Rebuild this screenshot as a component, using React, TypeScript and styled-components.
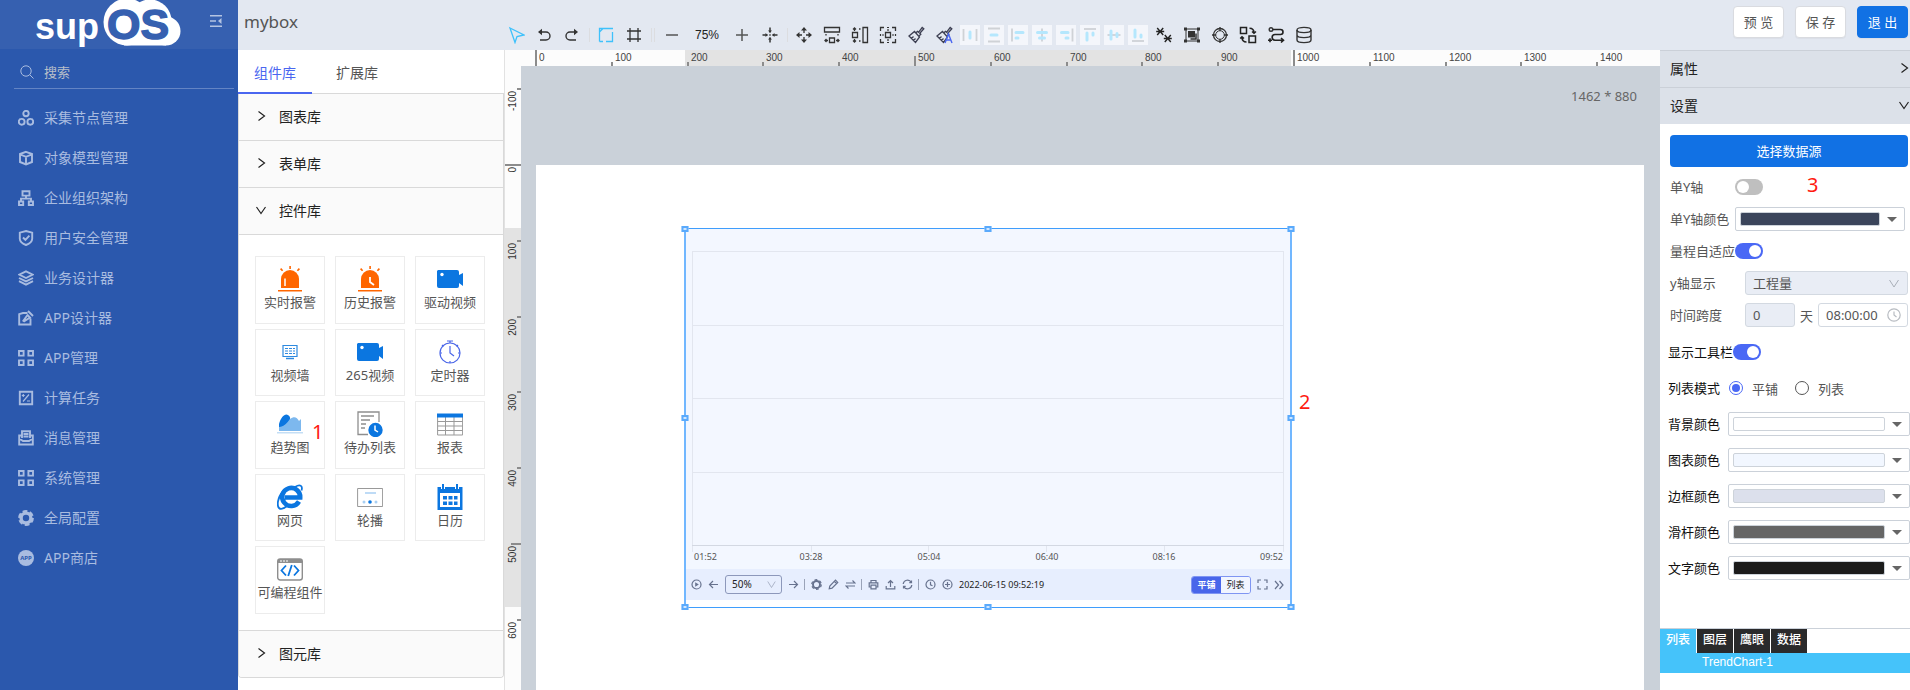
import React from 'react';
import styled, { createGlobalStyle, css } from 'styled-components';

const GlobalStyle = createGlobalStyle`
  *, *::before, *::after { box-sizing: border-box; }
  html, body { margin: 0; }
  body {
    font-family: "Noto Sans", "Noto Sans CJK SC", sans-serif;
    font-size: 14px;
    color: #333;
    overflow: hidden;
  }
  button, input, select { font: inherit; color: inherit; margin: 0; padding: 0; }
  button { background: none; border: 0; cursor: pointer; }
  svg { display: block; flex: none; }
`;

/* ---------- shell ---------- */

const Shell = styled.div`
  display: flex;
  height: 100vh;
  background: #fff;
`;

const Main = styled.div`
  flex: 1;
  min-width: 0;
  display: flex;
  flex-direction: column;
`;

const Workspace = styled.div`
  flex: 1;
  min-height: 0;
  display: flex;
`;

/* ---------- sidebar ---------- */

const Sidebar = styled.aside`
  width: 238px;
  flex: none;
  background: #2b58ad;
  color: #a9bce0;
`;

const SidebarHead = styled.div`
  height: 49px;
  display: flex;
  justify-content: space-between;
  padding-right: 15px;
  background: #3660b0;
`;

const CollapseButton = styled.button`
  height: 42px;
  color: #b4c4e2;
`;

const SearchBox = styled.label`
  display: flex;
  align-items: center;
  gap: 10px;
  height: 40px;
  margin: 0 4px 9px 14px;
  padding: 7px 0 0 6px;
  border-bottom: 1px solid #6384c4;

  input {
    flex: 1;
    min-width: 0;
    border: 0;
    outline: 0;
    background: none;
    font-size: 13px;
  }
  input::placeholder { color: #b9bfc9; opacity: 1; }
`;

const Menu = styled.nav`
  display: flex;
  flex-direction: column;
`;

const MenuLink = styled.a`
  display: flex;
  align-items: center;
  gap: 10px;
  height: 40px;
  padding-left: 18px;
  color: inherit;
  text-decoration: none;
  line-height: 20px;
`;

/* ---------- top bar ---------- */

const TopBar = styled.header`
  display: flex;
  height: 50px;
  flex: none;
  background: #e3e8f1;
`;

const BoxTitle = styled.h1`
  width: 264px;
  margin: 0;
  padding: 10px 6px;
  font-size: 17px;
  line-height: 24px;
  font-weight: 400;
  color: #555;
`;

const Tools = styled.div`
  flex: 1;
  display: flex;
  align-items: center;
  height: 20px;
  margin-top: 25px;
`;

const ToolButton = styled.button`
  width: 28px;
  height: 20px;
  display: grid;
  place-items: center;
  color: #333;
`;

const AlignGroup = styled.div`
  display: flex;
  gap: 4px;
  padding: 0 2px;
`;

const AlignButton = styled.button`
  width: 20px;
  height: 20px;
  display: grid;
  place-items: center;
  background: #f4f6fb;
`;

const Divider = styled.i<{ $double?: boolean }>`
  width: ${(p) => (p.$double ? 10 : 6)}px;
  height: 14px;
  display: flex;
  justify-content: space-evenly;
  &::before { content: ''; width: 1px; background: #dcdde0; }
  ${(p) => p.$double && css`&::after { content: ''; width: 1px; background: #dcdde0; }`}
`;

const ZoomValue = styled.span`
  width: 42px;
  text-align: center;
  font: 12px/20px "Liberation Sans", sans-serif;
  color: #222;
`;

const Actions = styled.div`
  display: flex;
  gap: 11px;
  padding: 6px 2px 0 0;
`;

const ActionButton = styled.button<{ $primary?: boolean }>`
  width: 51px;
  height: 32px;
  padding-bottom: 2px;
  border-radius: 4px;
  font-size: 13px;
  border: 1px solid ${(p) => (p.$primary ? '#1171e4' : '#d9dbe0')};
  background: ${(p) => (p.$primary ? '#1171e4' : '#fff')};
  color: ${(p) => (p.$primary ? '#fff' : '#555')};
  box-shadow: 0 1px 1px rgba(0, 0, 0, 0.04);
  white-space: pre;
`;

/* ---------- component library ---------- */

const Library = styled.section`
  width: 267px;
  flex: none;
  border-right: 1px solid #e2e2e2;
  background: #fff;
`;

const TabBar = styled.div`
  display: flex;
  height: 44px;
  border-bottom: 1px solid #d9d9d9;
`;

const LibraryTab = styled.button<{ $active?: boolean }>`
  height: 44px;
  padding: 2px 16px 0;
  margin-right: 8px;
  border-bottom: 2px solid ${(p) => (p.$active ? '#4a66f0' : 'transparent')};
  color: ${(p) => (p.$active ? '#4a66f0' : '#555')};
`;

const Collapse = styled.div`
  border: 1px solid #d9d9d9;
  border-top: 0;
  border-radius: 0 0 4px 4px;
  overflow: hidden;
`;

const CollapseHead = styled.button<{ $last?: boolean }>`
  display: flex;
  align-items: center;
  gap: 12px;
  width: 100%;
  height: ${(p) => (p.$last ? 46 : 47)}px;
  padding: 0 0 2px 16px;
  background: #fafafa;
  border-bottom: ${(p) => (p.$last ? 0 : 1)}px solid #d9d9d9;
  color: #222;
`;

const CardGrid = styled.div`
  display: grid;
  grid-template-columns: repeat(3, 70px);
  grid-template-rows: repeat(5, 1fr);
  gap: 5px 10px;
  height: 396px;
  padding: 21px 16px 16px;
  border-bottom: 1px solid #d9d9d9;
`;

const Card = styled.button`
  position: relative;
  display: flex;
  flex-direction: column;
  align-items: center;
  padding-top: 9px;
  border: 1px solid #ececec;
  font-size: 13px;
  line-height: 20px;
  color: #555;
  white-space: nowrap;
`;

const Mark = styled.span<{ $x: number; $y: number }>`
  position: absolute;
  left: ${(p) => p.$x}px;
  top: ${(p) => p.$y}px;
  font-size: 20px;
  line-height: 24px;
  color: #ff1a10;
`;

/* ---------- canvas ---------- */

const CanvasArea = styled.section`
  flex: 1;
  min-width: 0;
  display: grid;
  grid-template: 16px minmax(0, 1fr) / 16px minmax(0, 1fr);
  background: #fcfcfc;
`;

const RulerStrip = styled.div`
  min-width: 0;
  min-height: 0;
`;

const Stage = styled.div`
  display: flex;
  flex-direction: column;
  padding: 0 16px 0 15px;
  background: #cad1d9;
`;

const StageSize = styled.div`
  height: 99px;
  padding: 20px 7px 0 0;
  text-align: right;
  font-size: 13px;
  line-height: 20px;
  color: #666;
`;

const Artboard = styled.div`
  position: relative;
  flex: 1;
  background: #fff;
`;

const Widget = styled.div`
  position: absolute;
  left: 148px;
  top: 63px;
  width: 608px;
  height: 380px;
  display: flex;
  flex-direction: column;
  border: solid #3f9dfc;
  border-width: 1px 2px;
  border-left-color: #71b7ff;
  border-right-color: #71b7ff;
`;

const Handle = styled.i<{ $x: string; $y: string }>`
  position: absolute;
  left: ${(p) => p.$x};
  top: ${(p) => p.$y};
  width: 7px;
  height: 6px;
  transform: translate(-50%, -50%);
  border: 2px solid #5aaafc;
  background: #cfe6ff;
`;

const ChartToolbar = styled.div`
  height: 31px;
  margin-bottom: 7px;
  display: flex;
  align-items: center;
  gap: 6px;
  padding: 0 6px 0 5px;
  background: #e7eefe;
  color: #67728e;
  font-size: 9px;

  button { display: block; }
  time { color: #222; padding-bottom: 1px; }
`;

const ChartDivider = styled.i`
  width: 1px;
  height: 11px;
  margin-left: -1px;
  background: #9aa3b8;
`;

const ScaleSelect = styled.div`
  position: relative;
  width: 57px;
  height: 19px;

  select {
    width: 100%;
    height: 100%;
    appearance: none;
    padding: 0 0 1px 6px;
    border: 1px solid #8d98bb;
    border-radius: 3px;
    background: transparent;
    font-size: 10px;
    color: #222;
  }
  svg { position: absolute; right: 6px; top: 5px; color: #9aa3b8; pointer-events: none; }
`;

const ModeSwitch = styled.div`
  display: flex;
  width: 60px;
  height: 18px;
  margin-left: auto;
  border: 1px solid #7f95f2;
  border-radius: 3px;
  overflow: hidden;
  font-size: 9px;
`;

const ModeButton = styled.button<{ $on?: boolean }>`
  flex: 1;
  line-height: 16px;
  background: ${(p) => (p.$on ? '#4966ea' : '#f1f5ff')};
  color: ${(p) => (p.$on ? '#fff' : '#222')};
  font-weight: ${(p) => (p.$on ? 700 : 400)};
`;

/* ---------- property panel ---------- */

const Panel = styled.aside`
  width: 250px;
  flex: none;
  display: flex;
  flex-direction: column;
  background: #fff;
  font-size: 13px;
`;

const PanelHead = styled.button`
  display: flex;
  align-items: center;
  justify-content: space-between;
  height: 37px;
  flex: none;
  padding: 0 0 2px 10px;
  border-top: 1px solid #cbd0d8;
  background: #dce1e9;
  font-size: 14px;
  color: #222;
`;

const Form = styled.form`
  flex: 1;
  min-height: 0;
  overflow: hidden;
  padding-top: 11px;
`;

const SourceButton = styled.button`
  display: block;
  width: calc(100% - 12px);
  height: 32px;
  margin: 0 2px 4px 10px;
  padding-bottom: 2px;
  border-radius: 4px;
  background: #1171e4;
  color: #fff;
`;

const FieldRow = styled.div`
  position: relative;
  display: flex;
  align-items: center;
  height: 32px;
  padding: 0 2px 0 10px;
  color: #555;
`;

const FieldLabel = styled.label`
  min-width: 65px;
  line-height: 20px;
`;

const StyleRows = styled.div`
  margin-top: 3px;
`;

const StyleRow = styled.div`
  display: flex;
  align-items: center;
  height: 36px;
  padding-left: 8px;
  color: #111;
`;

const StyleLabel = styled.label`
  min-width: 60px;
  line-height: 20px;
`;

const Switch = styled.input`
  appearance: none;
  width: 28px;
  height: 16px;
  flex: none;
  border-radius: 8px;
  background: #bfbfbf;
  display: flex;
  padding: 2px;
  &::before {
    content: '';
    width: 12px;
    height: 12px;
    border-radius: 50%;
    background: #fff;
  }
  &:checked { background: #4a68f5; justify-content: flex-end; }
`;

const ColorButton = styled.button<{ $inset?: boolean }>`
  flex: 1;
  display: flex;
  align-items: center;
  gap: 7px;
  height: 24px;
  padding: 0 7px 0 4px;
  margin-right: ${(p) => (p.$inset ? 3 : 0)}px;
  border: 1px solid #cbd1d9;
  border-radius: 2px;
`;

const Swatch = styled.span<{ $color: string }>`
  flex: 1;
  height: 14px;
  border: 1px solid #cdd3da;
  border-radius: 2px;
  background: ${(p) => p.$color};
`;

const Caret = styled.span`
  border: 5px solid transparent;
  border-top-color: #666;
  border-bottom: 0;
`;

const AxisSelect = styled.div`
  position: relative;
  flex: 1;
  margin-left: 10px;

  select {
    width: 100%;
    height: 24px;
    display: block;
    appearance: none;
    padding-left: 7px;
    border: 1px solid #d3d9e1;
    border-radius: 3px;
    background: #e9edf5;
    color: #555;
    opacity: 1;
  }
  svg { position: absolute; right: 9px; top: 8px; color: #a9afb8; pointer-events: none; }
`;

const DayInput = styled.input`
  width: 50px;
  height: 24px;
  flex: none;
  margin: 0 5px 0 10px;
  padding-left: 7px;
  border: 1px solid #d3d9e1;
  border-radius: 3px;
  background: #e9edf5;
`;

const TimeBox = styled.span`
  flex: 1;
  min-width: 0;
  display: flex;
  align-items: center;
  height: 24px;
  margin-left: 5px;
  padding: 0 6px 0 7px;
  border: 1px solid #d3d9e1;
  border-radius: 3px;
  color: #b8bcc2;

  input { flex: 1; width: 0; min-width: 0; border: 0; outline: 0; background: none; color: #555; }
`;

const RadioLabel = styled.label`
  display: flex;
  align-items: center;
  gap: 9px;
  margin: 0 16px 0 1px;
  color: #555;
`;

const Radio = styled.input`
  appearance: none;
  width: 14px;
  height: 14px;
  border: 1px solid #555;
  border-radius: 50%;
  display: grid;
  place-items: center;
  &:checked { border-color: #4a68f5; }
  &:checked::before {
    content: '';
    width: 8px;
    height: 8px;
    border-radius: 50%;
    background: #4a68f5;
  }
`;

const Layers = styled.div`
  height: 62px;
  flex: none;
  border-top: 1px solid #cbd1d9;
`;

const LayerTabs = styled.div`
  display: flex;
  gap: 1px;
`;

const LayerTab = styled.button<{ $active?: boolean }>`
  width: 36px;
  height: 24px;
  padding-bottom: 4px;
  background: ${(p) => (p.$active ? '#45c3fa' : '#2a2a2b')};
  color: #fff;
  font-size: 12px;
  font-weight: 500;
`;

const LayerItem = styled.button`
  display: block;
  width: 100%;
  height: 20px;
  padding: 0 0 2px 42px;
  background: #45c3fa;
  color: #fff;
  text-align: left;
  font: 500 12px/18px "Liberation Sans", sans-serif;
`;

/* ---------- icons ---------- */

type IconProps = { size: number; box?: number; w?: number; children: React.ReactNode };

const Icon = ({ size, box, w = 1, children }: IconProps) => (
  <svg width={size} height={size} viewBox={`0 0 ${box ?? size} ${box ?? size}`} fill="none"
    stroke="currentColor" strokeWidth={w} aria-hidden="true">
    {children}
  </svg>
);

const ChevronRight = () => <Icon size={12} w={1.2}><path d="M3.5 1.5 9.500 6 3.500 10.500" /></Icon>;
const ChevronDown = () => <Icon size={12} w={1.2}><path d="M1.500 3 6 9.500 10.500 3" /></Icon>;

const Logo = () => (
  <svg width="190" height="49" viewBox="0 0 190 49" role="img" aria-label="supOS">
    <g fill="#fff">
      <circle cx="127" cy="22" r="23.500" />
      <circle cx="150" cy="21" r="21.500" />
      <circle cx="166" cy="31" r="14.500" />
      <rect x="124" y="25" width="42" height="20.500" />
    </g>
    <g fontFamily="Liberation Sans, sans-serif" fontWeight="700">
      <text x="35" y="39" fontSize="36" fill="#fff">sup</text>
      <text x="107" y="39" fontSize="43" fill="#3660b0" stroke="#3660b0" strokeWidth="1.400">OS</text>
    </g>
  </svg>
);

const FourSquares = (
  <path d="M1 1h4.600v4.600H1zM10.400 1H15v4.600h-4.600zM1 10.400h4.600V15H1zM10.400 10.400H15V15h-4.600z" />
);

const menu: { label: string; icon: React.ReactNode }[] = [
  { label: '采集节点管理', icon: <><circle cx="8" cy="3.600" r="2.700" /><circle cx="3.700" cy="11.800" r="2.900" /><circle cx="12.300" cy="11.800" r="2.900" /></> },
  { label: '对象模型管理', icon: <path d="M8 1.800 14 4v8l-6 2.500L2 12V4zM2 4.300 8 6.800l6-2.500M8 6.800v7.500" /> },
  { label: '企业组织架构', icon: <path d="M4.500 1.200h7v4.400h-7zM8 5.600v3M3 11.500V8.600h10v2.900M1 11.500h4.200V15H1zM10.800 11.500H15V15h-4.200z" /> },
  { label: '用户安全管理', icon: <path d="M8 1 14.200 2.700v6c0 3-3 5-6.200 6.300C4.800 13.700 1.800 11.700 1.800 8.700v-6zM5 7.500l2.400 2.300 4-4.200" /> },
  { label: '业务设计器', icon: <path d="M8 1.300 14.800 4.600 8 8 1.200 4.600zM1 8l7 3.400L15 8M1 11.200l7 3.400 7-3.400" /> },
  { label: 'APP设计器', icon: <path d="M12.500 8.500v6H1.200V4.200L5 3h4.500M4.800 11.500 9.500 5M10 1l5 5M9 4.500l3 3-6.500 4.300" /> },
  { label: 'APP管理', icon: FourSquares },
  { label: '计算任务', icon: <><path d="M1.800 1.800h12.400v12.400H1.800z" /><path d="M5 11.500 11 4.500M3.800 5.500h3M5.300 4v3M9 11h3" strokeWidth="1.200" /></> },
  { label: '消息管理', icon: <path d="M3.500 5.500H1.200v9h13.600v-9h-2.300M4 8V1.300h8V8M1.200 8.500 5 11h6l3.800-2.500M5.500 4h5M5.500 6.500h5" /> },
  { label: '系统管理', icon: FourSquares },
  { label: '全局配置', icon: <><circle cx="8" cy="8" r="4.900" strokeWidth="3.400" /><circle cx="8" cy="8" r="6.900" strokeWidth="2" strokeDasharray="4.800 2.425" /></> },
  { label: 'APP商店', icon: <><circle cx="8" cy="8" r="8" fill="currentColor" stroke="none" /><text x="8" y="10.200" textAnchor="middle" fontSize="6" fontWeight="700" fill="#2b58ad" stroke="none">APP</text></> },
];

const blue = '#0b76e0';
const alarmBody = (
  <g stroke="none" fill="#ff6600">
    <path d="M4 22V13a9 9 0 0 1 18 0v9z" />
    <path d="M1 24h24v1.500H1zM12.300 0h1.600v3h-1.600zM3 3.200 4.200 2.100 6.200 4.200 5 5.300zM21.800 2.100 23 3.200 21 5.300 19.800 4.200z" />
  </g>
);
const camera = (
  <g stroke="none">
    <path d="M1 4h19a2 2 0 0 1 2 2v3l4-2v13l-4-3v3a2 2 0 0 1-2 2H2a2 2 0 0 1-2-2V5z" fill={blue} />
    <circle cx="5" cy="8.500" r="1.700" fill="#fff" />
  </g>
);

const cards: { label: string; icon: React.ReactNode; mark?: string }[] = [
  { label: '实时报警', icon: <>{alarmBody}<path d="M8 12.500V20" stroke="#fff" strokeWidth="1.500" /></> },
  { label: '历史报警', icon: <>{alarmBody}<path d="M13 11v5l4 3" stroke="#fff" strokeWidth="1.800" /></> },
  { label: '驱动视频', icon: camera },
  { label: '视频墙', icon: <g stroke="#2e8ae0"><path d="M6 6.500h14v11H6z" strokeWidth="1.200" /><path d="M8 9.500h3m1 0h3m1 0h2M8 12h3m1 0h3m1 0h2M8 14.500h3m1 0h3m1 0h2" strokeWidth="1.200" /><path d="M9 19.500h8" strokeWidth="1.500" /></g> },
  { label: '265视频', icon: camera },
  { label: '定时器', icon: <g stroke="#4a66e8" strokeWidth="1.200"><circle cx="13" cy="14" r="10" /><path d="M10 2h6M13 2v2M13 7v7l4 3M3 14h2M21 14h2M13 22v2M5 6l1.500 1.500M21 6l-1.500 1.500" /></g> },
  { label: '趋势图', mark: '1', icon: <g stroke="none"><path d="M2 18V13C4 6 8 2 11 4c5 3 1 9-9 14z" fill={blue} /><path d="M2 20v-4c5 0 8-4 11-8 4-3 7-2 9 2l2-2v12z" fill="#7db8ee" /><path d="M0 21h26v1.500H0z" fill="#c4def5" /></g> },
  { label: '待办列表', icon: <><path d="M22 11V1H1v22.500h10M4 5h13M4 9h9M4 13h5M4 17h4" stroke="#8e8e8e" strokeWidth="1.300" /><circle cx="18.500" cy="19" r="7.200" fill={blue} stroke="none" /><path d="M18 14.500V19l3 2" stroke="#fff" strokeWidth="1.500" /></> },
  { label: '报表', icon: <><path d="M.600 3v21h25V3M.600 10.500h25M.600 15h25M.600 19.500h25M8.500 6v18M17 6v18" stroke="#999" /><path d="M0 2.500h26v4H0z" fill={blue} stroke="none" /></> },
  { label: '网页', icon: <g stroke={blue}><path d="M22 17.500a9 9 0 1 1 1.200-4H8" strokeWidth="4.600" /><path d="M18 3c5-3 8-1.500 6.500 3.500M6 7C0 14 0 22 2 24s5 .500 8-2" strokeWidth="1.800" /></g> },
  { label: '轮播', icon: <><path d="M.600 4.500h25v18H.600z" stroke="#999" /><path d="M8 9h11" stroke="#a8cff3" strokeWidth="1.500" /><g stroke="none"><circle cx="7" cy="18" r="1.500" fill="#a8cff3" /><circle cx="13" cy="18" r="1.800" fill={blue} /><circle cx="19" cy="18" r="1.500" fill="#a8cff3" /></g></> },
  { label: '日历', icon: <g stroke="none"><path d="M.500 3h25v23H.500z" fill={blue} /><path d="M3 9h20v14H3zM4 0h4v5H4zM18 0h4v5h-4z" fill="#fff" /><path d="M5 0h2v5H5zM19 0h2v5h-2zM6 12h4v3.500H6zM11.500 12h4v3.500h-4zM17 12h3.500v3.500H17zM6 17.500h4V21H6zM11.500 17.500h4V21h-4zM17 17.500h3.500V21H17z" fill={blue} /></g> },
  { label: '可编程组件', icon: <><rect x=".700" y="3" width="24.600" height="21" rx="2.500" stroke="#8e8e8e" strokeWidth="1.400" /><path d="M1 3h24v4H1z" fill="#8e8e8e" stroke="none" /><path d="M3 5h2m1 0h2m1 0h2" stroke="#fff" /><path d="M9 9.500 4.500 14.500 9 19.500M17 9.500l4.500 5-4.500 5M14.800 9 11.200 20" stroke={blue} strokeWidth="1.800" /></> },
];

const brush = (
  <path d="M2 10 7.500 5.500l5 5.500L8.500 16.500zM9 6.800l1.500-1.500 1 1L15.200 1.500l1.600 1.300-4 4.400 1 1-1.500 1.500M4.500 12.500 6.500 10.500M6.500 14.500l2-2" strokeWidth="1.300" stroke="#3d3f52" />
);

type Tool = 'sep' | 'sep2' | 'zoom' | [string, React.ReactNode];

const tools: Tool[] = [
  ['选择', <path d="M3 2 17 9l-7 1.500L8 16.500z" stroke="#3fc1fb" strokeWidth="1.300" />],
  ['撤销', <><path d="M4 6h7a4 4 0 0 1 0 8H5" strokeWidth="1.400" /><path d="M3 6l4-3.200v6.400z" fill="currentColor" stroke="none" /></>],
  ['重做', <><path d="M13 6H7a4 4 0 0 0 0 8h6" strokeWidth="1.400" /><path d="M15 6l-4-3.200v6.400z" fill="currentColor" stroke="none" /></>],
  'sep',
  ['框选', <path d="M2.500 15.500v-13H16M6 2.500 2.500 6M2.500 15.500H6M9 15.500h6.500V6" stroke="#3fc1fb" strokeWidth="1.300" />],
  ['网格', <path d="M5 2v14M13 2v14M2 5h14M2 13h14" strokeWidth="1.300" />],
  'sep2',
  ['缩小', <path d="M3 9h12" strokeWidth="1.500" stroke="#555" />],
  'zoom',
  ['放大', <path d="M3 9h12M9 3v12" strokeWidth="1.500" stroke="#555" />],
  ['居中', <><path d="M1.500 9h5M11.500 9h5M9 1.500v5M9 11.500v5" strokeWidth="1.500" /><path d="M4.500 7 6.800 9 4.500 11zM13.500 7 11.200 9l2.300 2zM7 4.500h4L9 6.800zM7 13.500h4L9 11.200zM8.300 8.300h1.400v1.400H8.300z" fill="currentColor" stroke="none" /></>],
  'sep',
  ['移动', <><path d="M9 1 12 4.500H6zM9 17l3-3.500H6zM1 9l3.500-3v6zM17 9l-3.500-3v6z" fill="currentColor" stroke="none" /><path d="M9 4v3M9 11v3M4 9h3M11 9h3" strokeWidth="1.300" /></>],
  ['等宽', <path d="M1.500 1.500h15v4.500h-15zM6.500 12h5v4.500h-5zM2 14.500h3M13 14.500h3M3 8v1.500M15 8v1.500M3.500 13 2 14.500 3.500 16M14.500 13l1.500 1.500-1.500 1.500" strokeWidth="1.300" />],
  ['等高', <path d="M12 1.500h4.500v15H12zM1.500 6.500h5v5h-5zM3.500 2v3M3.500 13v3M8 3h1.500M8 15h1.500M2 3.500 3.500 2 5 3.500M2 14.500 3.500 16 5 14.500" strokeWidth="1.300" />],
  ['等大', <><path d="M1.500 5V1.500H5M13 1.500h3.500V5M16.500 13v3.500H13M5 16.500H1.500V13M6.500 6.500h5v5h-5z" strokeWidth="1.300" /><path d="M8 1.500h2M8 16.500h2M1.500 8v2M16.500 8v2M9 3v2M9 13v2M3 9h2M13 9h2" strokeWidth="1.200" /></>],
  ['格式刷', brush],
  ['样式刷', <>{brush}<path d="M10 17 13.500 8 17 17M11 14h5" stroke="#4a66f0" strokeWidth="1.400" /></>],
];

const gray = '#cfd2d6';
const sky = '#b5e7fd';
const aligns: [string, string, string][] = [
  ['水平分布', 'M3.500 4v12M16.500 4v12', 'M10 7v6'],
  ['垂直分布', 'M4 3.500h12M4 16.500h12', 'M7 10h6'],
  ['左对齐', 'M4 3.500v13', 'M8 7.500h7M8 13h2'],
  ['水平居中', 'M10 3.500v13', 'M5.500 7.500h9M7.500 13h5'],
  ['右对齐', 'M16.500 3.500v13', 'M5.500 7.500H12M10 13h2'],
  ['顶对齐', 'M4 4h12', 'M7 8v7M13 8v2'],
  ['垂直居中', 'M3.500 10h13', 'M7 6v8M13 8.500v3'],
  ['底对齐', 'M4 16h12', 'M7 5v7M13 10v2'],
];

const burst = (x: number, y: number) =>
  `M${x - 3} ${y - 3.5}l6 7M${x + 3} ${y - 3.5}l-6 7M${x - 4} ${y}h8`;

const extras: [string, React.ReactNode][] = [
  ['取消组合', <path d={burst(5.2, 5.5) + burst(12.8, 12.5)} strokeWidth="1.400" stroke="#222" />],
  ['组合', <><path d="M3 3h12v12H3z" /><path d="M1 1.500h3v3H1zM14 1.500h3v3h-3zM1 13.500h3v3H1zM14 13.500h3v3h-3zM5 5h7v6.500H5z" fill="#333" stroke="none" /><path d="M13 7.500v5.500H7.500" strokeWidth="1.500" /></>],
  ['定位', <><circle cx="9" cy="9" r="6.500" strokeWidth="1.300" /><circle cx="9" cy="9" r="4.300" /><path d="M9 1v4M9 13v4M1 9h4M13 9h4" strokeWidth="1.300" /></>],
  ['替换', <path d="M1.500 1.500h6v6h-6zM10 10h6.500v6.500H10zM10.500 2.200c3 0 4.500 1.500 4.500 4.800M13 5.500l2 1.700 2-1.700M7.500 16C4.500 16 3 14.500 3 11M1.200 12.500 3 10.800l2 1.700" strokeWidth="1.500" stroke="#222" />],
  ['连线', <><circle cx="4" cy="3.500" r="1.800" strokeWidth="1.400" /><path d="M6 3.500h7.500a2.500 2.500 0 0 1 0 5H8a2.800 2.800 0 0 0 0 5.700h8M14 12l2.500 2.200L14 16.500M1 14.200h4M3 12.200v4" strokeWidth="1.600" stroke="#222" /></>],
  ['数据库', <><ellipse cx="9" cy="4" rx="7" ry="2.600" strokeWidth="1.400" /><path d="M2 4v10c0 3.500 14 3.500 14 0V4M2 9c0 3.500 14 3.500 14 0" strokeWidth="1.400" /></>],
];

/* ---------- rulers ---------- */

const STEP = 75.8;

const HorizontalRuler = () => (
  <svg width="100%" height="16">
    <rect width="100%" height="16" fill="#fcfcfc" />
    <rect x="164" width="606" height="16" fill="#e3e3e3" />
    {Array.from({ length: 15 }, (_, i) => {
      const x = Math.round(15 + i * STEP);
      const h = i % 10 === 0 ? 16 : i % 5 === 0 ? 10 : 4;
      return (
        <g key={i}>
          <rect x={x - 1} y={16 - h} width="2" height={h} fill="#8c8c8c" />
          <text x={x + 3} y="11" fontSize="10" fontFamily="Liberation Sans, sans-serif" fill="#444">{i * 100}</text>
        </g>
      );
    })}
  </svg>
);

const VerticalRuler = () => (
  <svg width="16" height="100%">
    <rect width="16" height="100%" fill="#fcfcfc" />
    <rect y="162" width="16" height="379" fill="#e3e3e3" />
    {Array.from({ length: 8 }, (_, k) => {
      const i = k - 1;
      const y = Math.round(99 + i * STEP);
      const w = i % 10 === 0 ? 16 : i % 5 === 0 ? 10 : 4;
      return (
        <g key={i}>
          <rect x={16 - w} y={y - 1} width={w} height="2" fill="#8c8c8c" />
          <text transform={`translate(11 ${y + 2}) rotate(-90)`} textAnchor="end" fontSize="10"
            fontFamily="Liberation Sans, sans-serif" fill="#333">{i * 100}</text>
        </g>
      );
    })}
  </svg>
);

/* ---------- trend chart widget ---------- */

const TrendChart = () => (
  <svg width="100%" height="340" viewBox="0 0 604 340" role="img" aria-label="趋势图">
    <rect width="604" height="340" fill="#f3f7ff" />
    <g stroke="#e2e6ef" fill="none">
      <path d="M6.500 22.500h591M6.500 96.500h591M6.500 169.500h591M6.500 243.500h591M6.500 22v301M597.500 22v301M125.500 316v7M242.500 316v7M360.500 316v7M478.500 316v7" />
      <path d="M6 316.500h592" stroke="#d3d8e2" />
    </g>
    <g fontSize="9" fill="#555" textAnchor="middle">
      <text x="8" y="331" textAnchor="start">01:52</text>
      <text x="125" y="331">03:28</text>
      <text x="243" y="331">05:04</text>
      <text x="361" y="331">06:40</text>
      <text x="478" y="331">08:16</text>
      <text x="597" y="331" textAnchor="end">09:52</text>
    </g>
  </svg>
);

const chartTools: Record<string, React.ReactNode> = {
  播放: <><circle cx="5.500" cy="5.500" r="4.500" /><path d="M4.200 3.200v4.600L7.800 5.500z" fill="currentColor" stroke="none" /></>,
  后退: <path d="M10 5.500H1.500M5 2 1.500 5.500 5 9" />,
  前进: <path d="M1 5.500h8.500M6 2l3.500 3.500L6 9" />,
  设置: <><circle cx="5.500" cy="5.500" r="3.500" strokeWidth="1.900" /><circle cx="5.500" cy="5.500" r="4.800" strokeDasharray="2.800 2.226" /></>,
  编辑: <path d="M1.200 9.800l.600-2.800L7.500 1.200l2.200 2.200-5.700 5.700zM6.500 2.500l2 2" />,
  切换: <path d="M1 4h9L7.500 1.500M10 7H1l2.500 2.500" />,
  打印: <path d="M3 3.500v-2h5v2M3 8H1.200V3.800h8.600V8H8M3 6.200h5v3.600H3z" />,
  导出: <path d="M1.200 7v2.800h8.600V7M5.500 8V1.500M3 4l2.500-2.500L8 4" />,
  刷新: <path d="M1.200 5A4.300 4.300 0 0 1 9.300 3.500M9.800 6a4.300 4.300 0 0 1-8.100 1.500M9.500 1.500v2.200H7.300M1.500 9.500V7.300h2.200" />,
  时间: <><circle cx="5.500" cy="5.500" r="4.500" /><path d="M5.500 2.800v3l2 1" /></>,
  添加: <><circle cx="5.500" cy="5.500" r="4.500" /><path d="M5.500 3v5M3 5.500h5" /></>,
};

const ChartTool = ({ name }: { name: string }) => (
  <button type="button" aria-label={name}><Icon size={11} w={1.2}>{chartTools[name]}</Icon></button>
);

const near = '-1px';
const far = 'calc(100% + 1px)';
const handles: [string, string][] = [
  [near, '0%'], ['50%', '0%'], [far, '0%'],
  [near, '50%'], [far, '50%'],
  [near, '100%'], ['50%', '100%'], [far, '100%'],
];

const styleColors: [string, string][] = [
  ['背景颜色', '#ffffff'],
  ['图表颜色', '#f2f7ff'],
  ['边框颜色', '#dce0ec'],
  ['滑杆颜色', '#666666'],
  ['文字颜色', '#1b1b1b'],
];

export default function App() {
  return (
    <Shell>
      <GlobalStyle />
      <Sidebar>
        <SidebarHead>
          <Logo />
          <CollapseButton aria-label="收起菜单">
            <Icon size={14} w={1.5}><path d="M1 1.700h12M1 7h6M1 12.300h12" /><path d="M12.500 4v6L9 7z" fill="currentColor" stroke="none" /></Icon>
          </CollapseButton>
        </SidebarHead>
        <SearchBox>
          <Icon size={14}><circle cx="6" cy="6" r="5.200" /><path d="M9.800 9.800 13.500 13.500" /></Icon>
          <input type="text" placeholder="搜索" aria-label="搜索" />
        </SearchBox>
        <Menu>
          {menu.map((m) => (
            <MenuLink href="#" key={m.label}>
              <Icon size={16} w={1.9}>{m.icon}</Icon>
              {m.label}
            </MenuLink>
          ))}
        </Menu>
      </Sidebar>

      <Main>
        <TopBar>
          <BoxTitle>mybox</BoxTitle>
          <Tools>
            {tools.map((t, i) => {
              if (t === 'sep') return <Divider key={i} />;
              if (t === 'sep2') return <Divider key={i} $double />;
              if (t === 'zoom') return <ZoomValue key={i}>75%</ZoomValue>;
              return <ToolButton key={i} aria-label={t[0]}><Icon size={18}>{t[1]}</Icon></ToolButton>;
            })}
            <AlignGroup>
              {aligns.map(([name, line, bars]) => (
                <AlignButton key={name} aria-label={name}>
                  <Icon size={20}>
                    <path d={line} stroke={gray} strokeWidth="1.800" />
                    <path d={bars} stroke={sky} strokeWidth="3" strokeLinecap="round" />
                  </Icon>
                </AlignButton>
              ))}
            </AlignGroup>
            {extras.map(([name, icon]) => (
              <ToolButton key={name} aria-label={name}><Icon size={18}>{icon}</Icon></ToolButton>
            ))}
          </Tools>
          <Actions>
            <ActionButton>预 览</ActionButton>
            <ActionButton>保 存</ActionButton>
            <ActionButton $primary>退 出</ActionButton>
          </Actions>
        </TopBar>

        <Workspace>
          <Library>
            <TabBar>
              <LibraryTab $active>组件库</LibraryTab>
              <LibraryTab>扩展库</LibraryTab>
            </TabBar>
            <Collapse>
              <CollapseHead><ChevronRight />图表库</CollapseHead>
              <CollapseHead><ChevronRight />表单库</CollapseHead>
              <CollapseHead><ChevronDown />控件库</CollapseHead>
              <CardGrid>
                {cards.map((c) => (
                  <Card key={c.label}>
                    <Icon size={26}>{c.icon}</Icon>
                    {c.label}
                    {c.mark && <Mark $x={56} $y={18}>{c.mark}</Mark>}
                  </Card>
                ))}
              </CardGrid>
              <CollapseHead $last><ChevronRight />图元库</CollapseHead>
            </Collapse>
          </Library>

          <CanvasArea>
            <span />
            <RulerStrip><HorizontalRuler /></RulerStrip>
            <RulerStrip><VerticalRuler /></RulerStrip>
            <Stage>
              <StageSize>1462 * 880</StageSize>
              <Artboard>
                <Widget>
                  <TrendChart />
                  <ChartToolbar>
                    <ChartTool name="播放" />
                    <ChartTool name="后退" />
                    <ScaleSelect>
                      <select aria-label="步长" defaultValue="50%"><option>50%</option></select>
                      <Icon size={9} box={12}><path d="M1 2 6 10 11 2" /></Icon>
                    </ScaleSelect>
                    <ChartTool name="前进" />
                    <ChartDivider />
                    <ChartTool name="设置" />
                    <ChartTool name="编辑" />
                    <ChartTool name="切换" />
                    <ChartDivider />
                    <ChartTool name="打印" />
                    <ChartTool name="导出" />
                    <ChartTool name="刷新" />
                    <ChartDivider />
                    <ChartTool name="时间" />
                    <ChartTool name="添加" />
                    <time>2022-06-15 09:52:19</time>
                    <ModeSwitch>
                      <ModeButton $on>平铺</ModeButton>
                      <ModeButton>列表</ModeButton>
                    </ModeSwitch>
                    <button type="button" aria-label="全屏">
                      <Icon size={11} w={1.2}><path d="M1 4V1h3M7 1h3v3M10 7v3H7M4 10H1V7" /></Icon>
                    </button>
                    <button type="button" aria-label="更多">
                      <Icon size={10} w={1.2}><path d="M1 1l3.500 4L1 9M5.500 1 9 5 5.500 9" /></Icon>
                    </button>
                  </ChartToolbar>
                  {handles.map(([x, y]) => <Handle key={x + y} $x={x} $y={y} />)}
                </Widget>
                <Mark $x={763} $y={225}>2</Mark>
              </Artboard>
            </Stage>
          </CanvasArea>

          <Panel>
            <PanelHead>属性<ChevronRight /></PanelHead>
            <PanelHead>设置<ChevronDown /></PanelHead>
            <Form onSubmit={(e) => e.preventDefault()}>
              <SourceButton type="button">选择数据源</SourceButton>
              <FieldRow>
                <FieldLabel htmlFor="single-y">单Y轴</FieldLabel>
                <Switch id="single-y" type="checkbox" />
                <Mark $x={147} $y={2}>3</Mark>
              </FieldRow>
              <FieldRow>
                <FieldLabel htmlFor="single-y-color">单Y轴颜色</FieldLabel>
                <ColorButton id="single-y-color" type="button" $inset>
                  <Swatch $color="#3b455b" /><Caret />
                </ColorButton>
              </FieldRow>
              <FieldRow>
                <FieldLabel htmlFor="auto-range">量程自适应</FieldLabel>
                <Switch id="auto-range" type="checkbox" defaultChecked />
              </FieldRow>
              <FieldRow>
                <FieldLabel htmlFor="y-display">y轴显示</FieldLabel>
                <AxisSelect>
                  <select id="y-display" disabled defaultValue="工程量"><option>工程量</option></select>
                  <Icon size={10}><path d="M.500 1 5 8 9.500 1" /></Icon>
                </AxisSelect>
              </FieldRow>
              <FieldRow>
                <FieldLabel htmlFor="span-days">时间跨度</FieldLabel>
                <DayInput id="span-days" type="text" defaultValue="0" />
                天
                <TimeBox>
                  <input type="text" aria-label="时间" defaultValue="08:00:00" />
                  <Icon size={14} w={1.2}><circle cx="7" cy="7" r="6.200" /><path d="M7 3.500V7l2.500 2" /></Icon>
                </TimeBox>
              </FieldRow>
              <StyleRows>
                <StyleRow>
                  <StyleLabel htmlFor="show-tools">显示工具栏</StyleLabel>
                  <Switch id="show-tools" type="checkbox" defaultChecked />
                </StyleRow>
                <StyleRow role="radiogroup" aria-labelledby="list-mode">
                  <StyleLabel as="span" id="list-mode">列表模式</StyleLabel>
                  <RadioLabel><Radio type="radio" name="mode" defaultChecked />平铺</RadioLabel>
                  <RadioLabel><Radio type="radio" name="mode" />列表</RadioLabel>
                </StyleRow>
                {styleColors.map(([label, color], i) => (
                  <StyleRow key={label}>
                    <StyleLabel htmlFor={`style-color-${i}`}>{label}</StyleLabel>
                    <ColorButton id={`style-color-${i}`} type="button">
                      <Swatch $color={color} /><Caret />
                    </ColorButton>
                  </StyleRow>
                ))}
              </StyleRows>
            </Form>
            <Layers>
              <LayerTabs>
                <LayerTab $active>列表</LayerTab>
                <LayerTab>图层</LayerTab>
                <LayerTab>鹰眼</LayerTab>
                <LayerTab>数据</LayerTab>
              </LayerTabs>
              <LayerItem>TrendChart-1</LayerItem>
            </Layers>
          </Panel>
        </Workspace>
      </Main>
    </Shell>
  );
}
